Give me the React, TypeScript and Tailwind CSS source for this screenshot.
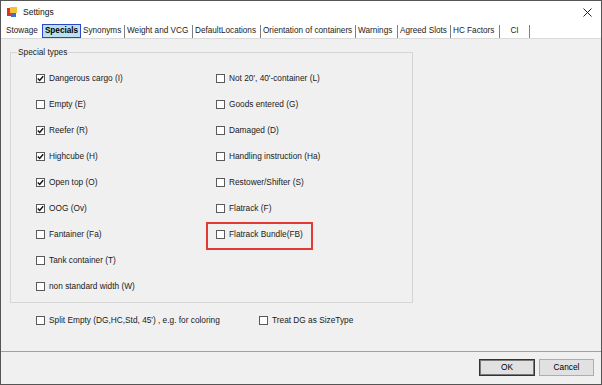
import React from 'react';

const font = { fontFamily: '"Liberation Sans", Arial, sans-serif' };

const tabs = [
  { label: 'Stowage', w: 'w-[38px]', sep: false },
  { label: 'Specials', w: 'w-[39px]', active: true },
  { label: 'Synonyms', w: 'w-[44px]', sep: true },
  { label: 'Weight and VCG', w: 'w-[68px]', sep: true },
  { label: 'DefaultLocations', w: 'w-[68px]', sep: true },
  { label: 'Orientation of containers', w: 'w-[95px]', sep: true },
  { label: 'Warnings', w: 'w-[42px]', sep: true },
  { label: 'Agreed Slots', w: 'w-[53px]', sep: true },
  { label: 'HC Factors', w: 'w-[49px]', sep: true },
  { label: 'CI', w: 'w-[30px]', sep: true, center: true },
];

const left = [
  { label: 'Dangerous cargo (I)', checked: true },
  { label: 'Empty (E)', checked: false },
  { label: 'Reefer (R)', checked: true },
  { label: 'Highcube (H)', checked: true },
  { label: 'Open top (O)', checked: true },
  { label: 'OOG (Ov)', checked: true },
  { label: 'Fantainer (Fa)', checked: false },
  { label: 'Tank container (T)', checked: false },
  { label: 'non standard width (W)', checked: false },
];

const right = [
  { label: "Not 20', 40'-container (L)", checked: false },
  { label: 'Goods entered (G)', checked: false },
  { label: 'Damaged (D)', checked: false },
  { label: 'Handling instruction (Ha)', checked: false },
  { label: 'Restower/Shifter (S)', checked: false },
  { label: 'Flatrack (F)', checked: false },
  { label: 'Flatrack Bundle(FB)', checked: false, marked: true },
];

const Check: React.FC<{ label: string; checked?: boolean; marked?: boolean }> = ({ label, checked, marked }) => (
  <div className="relative flex items-center h-[26px]">
    <span className="w-[9px] h-[9px] border border-[#5a5a5a] bg-white flex items-center justify-center shrink-0">
      {checked && (
        <svg width="7" height="7" viewBox="0 0 7 7">
          <path d="M0.8 3.4 L2.7 5.4 L6.2 1.2" stroke="#111" strokeWidth="1.4" fill="none" />
        </svg>
      )}
    </span>
    <span className="ml-[4px] text-[8.3px] text-[#1a1a1a] whitespace-nowrap">{label}</span>
    {marked && <span className="absolute left-[-10px] top-[1px] w-[107px] h-[28px] border-2 border-[#e53935]" />}
  </div>
);

const App: React.FC = () => {
  return (
    <div style={font} className="w-[602px] h-[385px] flex flex-col border border-[#555] bg-[#f0f0f0] overflow-hidden">
      {/* Title bar */}
      <div className="h-[22px] bg-white flex items-center shrink-0">
        <svg width="10" height="10" viewBox="0 0 10 10" className="ml-[6px]">
          <rect x="0" y="1" width="5" height="8" fill="#d8342a" />
          <rect x="3" y="0" width="7" height="6" fill="#f3c23a" />
          <rect x="4" y="6" width="5" height="4" fill="#3a6fd8" />
        </svg>
        <span className="ml-[6px] text-[8.5px] text-[#111]">Settings</span>
        <svg width="9" height="9" viewBox="0 0 9 9" className="ml-auto mr-[9px]">
          <path d="M0.5 0.5 L8.5 8.5 M8.5 0.5 L0.5 8.5" stroke="#222" strokeWidth="1" />
        </svg>
      </div>

      {/* Tab strip */}
      <div className="h-[15px] bg-white flex items-end pl-[3px] shrink-0">
        {tabs.map(t => (
          <div
            key={t.label}
            className={`${t.w} flex items-center whitespace-nowrap text-[8.2px] ${
              t.active
                ? 'h-[14px] bg-[#b9e1f2] border-[1.5px] border-[#2c46c9] font-bold text-black justify-center'
                : `h-[13px] text-[#222] ${t.center ? 'justify-center' : 'pl-[2px]'} ${t.sep ? 'border-r border-[#808080]' : ''}`
            }`}
          >
            {t.label}
          </div>
        ))}
      </div>

      {/* Tab page */}
      <div className="flex-1 flex flex-col border-t border-[#dadada]">
        <div className="relative ml-[9px] mt-[13px] w-[403px] h-[251px] border border-[#d5d5d5]">
          <span className="absolute left-[6px] top-[-7px] px-[1px] bg-[#f0f0f0] text-[8.3px] text-[#1a1a1a]">Special types</span>
          <div className="flex pt-[12px] pl-[25px]">
            <div className="w-[180px] flex flex-col">
              {left.map(c => <Check key={c.label} {...c} />)}
            </div>
            <div className="flex flex-col">
              {right.map(c => <Check key={c.label} {...c} />)}
            </div>
          </div>
        </div>

        <div className="flex pl-[35px] mt-[4px]">
          <div className="w-[223px]">
            <Check label="Split Empty (DG,HC,Std, 45') , e.g. for coloring" />
          </div>
          <Check label="Treat DG as SizeType" />
        </div>
      </div>

      {/* Button bar */}
      <div className="h-[33px] border-t border-[#a0a0a0] flex justify-end items-start pt-[7px] pr-[7px] gap-[4px] shrink-0">
        <button className="w-[56px] h-[17px] bg-[#e1e1e1] border border-[#333] outline outline-1 outline-[#7a7a7a] -outline-offset-2 text-[8.3px] text-black">OK</button>
        <button className="w-[55px] h-[17px] bg-[#e1e1e1] border border-[#adadad] text-[8.3px] text-black">Cancel</button>
      </div>
    </div>
  );
};

export default App;
